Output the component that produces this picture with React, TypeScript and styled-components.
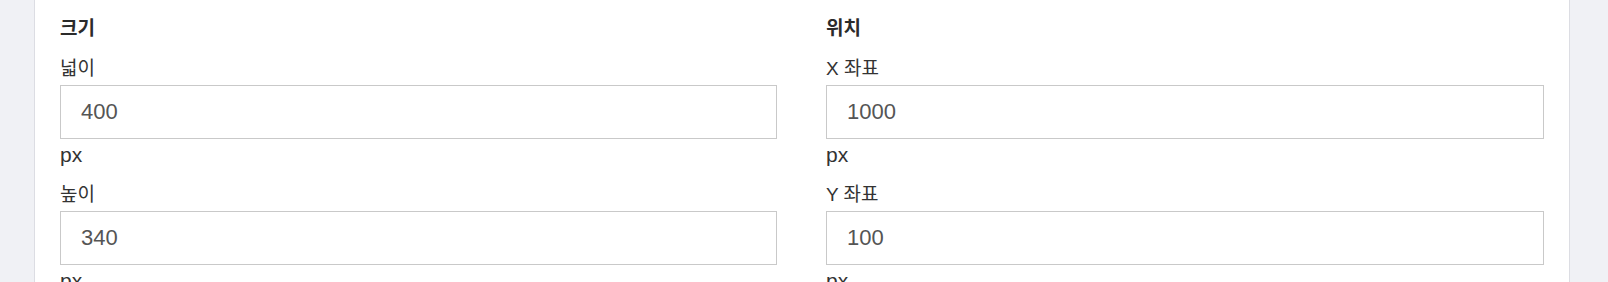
import React from "react";
import styled, { createGlobalStyle } from "styled-components";

const Global = createGlobalStyle`
  html, body {
    margin: 0;
    padding: 0;
    background: #f0f1f5;
    overflow: hidden;
  }
  body {
    font-family: "Liberation Sans", "Noto Sans CJK KR", Arial, sans-serif;
    color: #333;
  }
  * { box-sizing: border-box; }
`;

const Page = styled.div`
  padding-left: 34px;
  height: 282px;
`;

const Panel = styled.div`
  width: 1536px;
  min-height: 320px;
  background: #fff;
  border-left: 1px solid #dcdde3;
  border-right: 1px solid #dcdde3;
  padding: 17px 25px 0 25px;
`;

const Columns = styled.div`
  display: grid;
  grid-template-columns: 717px 718px;
  column-gap: 49px;
`;

const Column = styled.section`
  display: flex;
  flex-direction: column;
`;

const Heading = styled.h3`
  margin: 0 0 16px 0;
  font-size: 19px;
  line-height: 24px;
  font-weight: 700;
  color: #2b2b2b;
`;

const Field = styled.div`
  display: flex;
  flex-direction: column;
  margin-bottom: 16px;
`;

const Label = styled.label`
  font-size: 19px;
  line-height: 24px;
  color: #333;
  margin-bottom: 4px;
`;

const Input = styled.input`
  width: 100%;
  height: 54px;
  padding: 0 20px;
  border: 1px solid #c9c9c9;
  border-radius: 0;
  background: #fff;
  font-family: "Liberation Sans", "Noto Sans CJK KR", Arial, sans-serif;
  font-size: 22px;
  color: #555;
  outline: none;
`;

const Unit = styled.span`
  font-size: 21px;
  line-height: 24px;
  margin-top: 4px;
  color: #333;
`;

type FieldDef = { label: string; value: string };

const groups: { title: string; fields: FieldDef[] }[] = [
  {
    title: "크기",
    fields: [
      { label: "넓이", value: "400" },
      { label: "높이", value: "340" },
    ],
  },
  {
    title: "위치",
    fields: [
      { label: "X 좌표", value: "1000" },
      { label: "Y 좌표", value: "100" },
    ],
  },
];

export default function App() {
  return (
    <>
      <Global />
      <Page>
        <Panel>
          <Columns>
            {groups.map((g) => (
              <Column key={g.title}>
                <Heading>{g.title}</Heading>
                {g.fields.map((f) => (
                  <Field key={f.label}>
                    <Label>{f.label}</Label>
                    <Input type="text" defaultValue={f.value} readOnly />
                    <Unit>px</Unit>
                  </Field>
                ))}
              </Column>
            ))}
          </Columns>
        </Panel>
      </Page>
    </>
  );
}
